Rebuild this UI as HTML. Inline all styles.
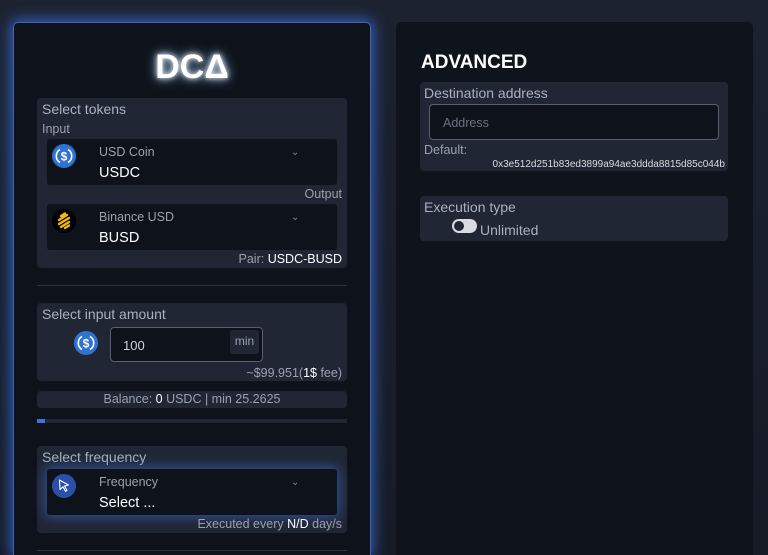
<!DOCTYPE html>
<html><head><style>
*{box-sizing:border-box;margin:0;padding:0}
html,body{width:768px;height:555px;overflow:hidden}
body{background:linear-gradient(180deg,#1c2230,#161b26);font-family:"Liberation Sans",sans-serif;position:relative;color:#a9b0bd}
.card{position:absolute;background:#0e121b;border-radius:5px}
.l{left:13px;top:22px;width:358px;height:533px;box-shadow:0 0 14px 3px rgba(60,110,220,.75);border:1px solid #3b64b3;border-bottom:none;border-radius:5px 5px 0 0}
.r{left:396px;top:22px;width:357px;height:533px;background:#0f131c;border-radius:5px 5px 0 0}
.box{position:absolute;background:#202633;border-radius:4px}
.t{position:absolute;font-size:14px;color:#aab1be}
.sel{position:absolute;left:10px;width:290px;height:46px;background:#0e121b;border-radius:3px}
.sel .a{position:absolute;left:52px;top:6px;font-size:12.5px;color:#9aa1ad}
.sel .b{position:absolute;left:52px;top:26px;font-size:14.5px;color:#fff}
.sel .c{position:absolute;left:244px;top:8px;font-size:10px;color:#888}
.ic{position:absolute;left:5px;top:5px;width:24px;height:24px}
.sm{position:absolute;font-size:12.5px;color:#9aa1ad}
.w{color:#fff}
</style></head><body>
<div class="card l"></div>
<div class="card r"></div>
<div style="position:absolute;left:0;width:384px;top:48px;text-align:center;font:bold 34px 'Liberation Sans',sans-serif;color:#fff;text-shadow:0 0 6px #fff,0 0 12px #9cf">DCΔ</div>

<svg width="0" height="0" style="position:absolute"><defs>
<symbol id="usdc" viewBox="0 0 24 24"><circle cx="12" cy="12" r="12" fill="#2f72d4"/><path d="M8 5.5A7.5 7.5 0 0 0 8 18.5M16 5.5A7.5 7.5 0 0 1 16 18.5" stroke="#fff" stroke-width="1.6" fill="none"/><text x="12" y="16.5" text-anchor="middle" font-family="Liberation Sans" font-weight="bold" font-size="12" fill="#fff">$</text></symbol>
</defs></svg>

<div class="box" style="left:37px;top:98px;width:310px;height:170px">
<div class="t" style="left:5px;top:3px">Select tokens</div>
<div class="sm" style="left:5px;top:24px">Input</div>
<div class="sel" style="top:41px"><svg class="ic"><use href="#usdc"/></svg><div class="a">USD Coin</div><div class="b">USDC</div><div class="c">⌄</div></div>
<div class="sm" style="right:5px;top:89px">Output</div>
<div class="sel" style="top:106px"><svg class="ic" viewBox="0 0 24 24"><circle cx="12" cy="12" r="12" fill="#000"/><g stroke="#f0b90b" stroke-width="2.4" stroke-linecap="round"><path d="M9 7l4-2.5M7 11l8-5M7 15l10-6M9 18l8-5M13 19l4-2.5"/></g></svg><div class="a">Binance USD</div><div class="b">BUSD</div><div class="c">⌄</div></div>
<div class="sm" style="right:5px;top:154px">Pair: <span class="w">USDC-BUSD</span></div>
</div>
<div style="position:absolute;left:37px;top:285px;width:310px;height:1px;background:#2a3040"></div>

<div class="box" style="left:37px;top:303px;width:310px;height:78px">
<div class="t" style="left:5px;top:3px">Select input amount</div>
<svg style="position:absolute;left:37px;top:28px;width:24px;height:24px"><use href="#usdc"/></svg>
<div style="position:absolute;left:73px;top:24px;width:153px;height:35px;background:#0e121b;border:1px solid #59606c;border-radius:4px"><span style="position:absolute;left:12px;top:10px;font-size:13px;color:#cfd3da">100</span><span style="position:absolute;right:3px;top:2px;width:29px;height:24px;background:#202633;border-radius:3px;font-size:12px;color:#9aa1ad;text-align:center;line-height:22px">min</span></div>
<div class="sm" style="right:5px;top:63px">~$99.951(<span class="w">1$</span> fee)</div>
</div>
<div class="box" style="left:37px;top:391px;width:310px;height:17px;text-align:center;font-size:12.5px;color:#9aa1ad;line-height:17px">Balance: <span class="w">0</span> USDC | min 25.2625</div>
<div style="position:absolute;left:37px;top:419px;width:310px;height:4px;background:#202633"><div style="width:8px;height:4px;background:#3d74d8"></div></div>

<div class="box" style="left:37px;top:446px;width:310px;height:87px">
<div class="t" style="left:5px;top:3px">Select frequency</div>
<div class="sel" style="top:23px;box-shadow:0 0 12px 2px rgba(60,110,220,.6)"><svg class="ic" viewBox="0 0 24 24"><circle cx="12" cy="12" r="12" fill="#2c4fa8"/><path d="M7.5 6l9 5-4 1 2.5 4.5-1.5.8-2.5-4.5-3 2.7z" fill="none" stroke="#fff" stroke-width="1.1" stroke-linejoin="round"/></svg><div class="a">Frequency</div><div class="b">Select ...</div><div class="c">⌄</div></div>
<div class="sm" style="right:5px;top:71px">Executed every <span class="w">N/D</span> day/s</div>
</div>
<div style="position:absolute;left:37px;top:550px;width:310px;height:1px;background:#2a3040"></div>

<div style="position:absolute;left:421px;top:52px;font:bold 19px 'Liberation Sans',sans-serif;color:#fff">ADVANCED</div>
<div class="box" style="left:420px;top:82px;width:308px;height:89px">
<div class="t" style="left:4px;top:3px">Destination address</div>
<div style="position:absolute;left:9px;top:22px;width:290px;height:36px;background:#0e121b;border:1px solid #59606c;border-radius:4px;font-size:12.5px;color:#6b7280;padding:11px 0 0 13px">Address</div>
<div class="sm" style="left:4px;top:61px">Default:</div>
<div style="position:absolute;right:3px;top:77px;font-size:10px;color:#d8dce2">0x3e512d251b83ed3899a94ae3ddda8815d85c044b</div>
</div>
<div class="box" style="left:420px;top:196px;width:308px;height:45px">
<div class="t" style="left:4px;top:3px">Execution type</div>
<div style="position:absolute;left:32px;top:23px;width:25px;height:14px;border-radius:7px;background:#d8dce2"><div style="position:absolute;left:2px;top:2px;width:10px;height:10px;border-radius:50%;background:#202633"></div></div>
<div class="t" style="left:60px;top:26px">Unlimited</div>
</div>
</body></html>
